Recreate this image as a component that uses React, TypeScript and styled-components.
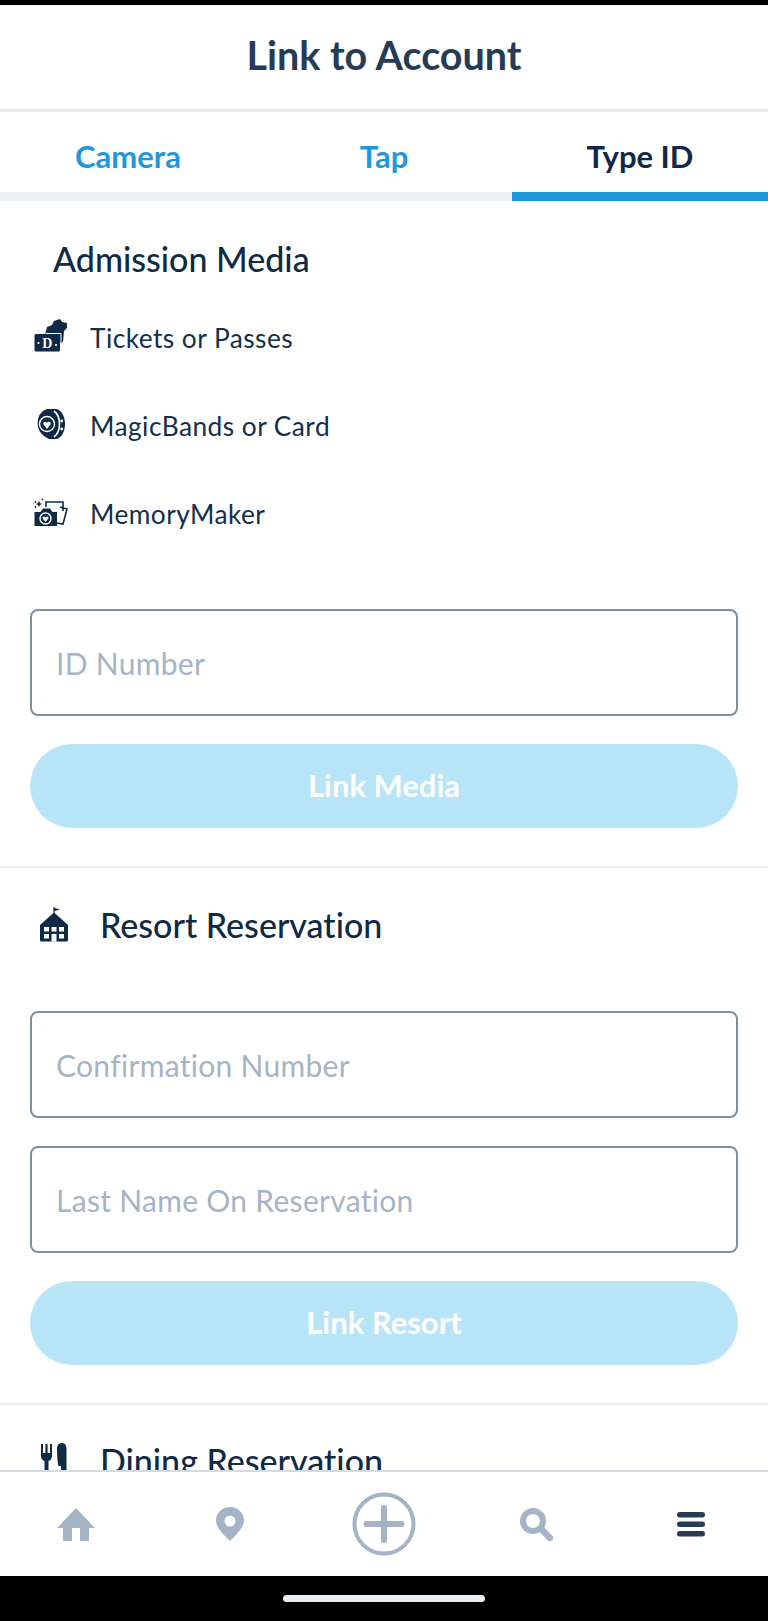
import React from "react";
import styled, { createGlobalStyle } from "styled-components";

const Global = createGlobalStyle`
  html, body { margin: 0; padding: 0; background: #fff; }
  * { box-sizing: border-box; }
  body { font-family: "Lato", "Liberation Sans", sans-serif; font-variant-ligatures: none; }
`;

const Phone = styled.div`
  width: 768px;
  height: 1621px;
  display: flex;
  flex-direction: column;
  overflow: hidden;
  background: #fff;
`;
const TopEdge = styled.div`
  height: 5px;
  flex: none;
  background: #000;
`;
const Header = styled.header`
  height: 107px;
  flex: none;
  display: flex;
  align-items: center;
  justify-content: center;
  padding-bottom: 6px;
  border-bottom: 3px solid #e8ecef;
`;
const Title = styled.h1`
  margin: 0;
  font-size: 39.5px;
  font-weight: 700;
  color: #253b56;
`;
const Tabs = styled.nav`
  flex: none;
  display: grid;
  grid-template-columns: repeat(3, 1fr);
  height: 89px;
`;
const Tab = styled.div<{ $active?: boolean }>`
  display: flex;
  align-items: center;
  justify-content: center;
  padding-top: 7px;
  font-size: 31px;
  font-weight: 700;
  color: ${(p) => (p.$active ? "#10294a" : "#1f97dc")};
  border-bottom: 9px solid ${(p) => (p.$active ? "#1f97dc" : "#edf1f4")};
`;
const Content = styled.main`
  flex: 1;
  min-height: 0;
  overflow: hidden;
`;
const Section = styled.section`
  padding: 0 30px 38px;
  border-bottom: 2px solid #eceff1;
`;
const SectionHead = styled.h2`
  margin: 0;
  display: flex;
  align-items: center;
  gap: 30px;
  height: 40px;
  font-size: 34px;
  font-weight: 500;
  color: #0f2a45;
`;
const MediaHead = styled(SectionHead)`
  padding-left: 23px;
  margin-top: 37px;
`;
const ResortHead = styled(SectionHead)`
  margin: 36px 0 67px 8px;
`;
const DiningHead = styled(SectionHead)`
  margin: 35px 0 0 8px;
`;
const HeadIcon = styled.svg`
  width: 32px;
  height: 36px;
  flex: none;
  fill: #0f2a45;
`;
const MediaList = styled.ul`
  list-style: none;
  margin: 40px 0 75px;
  padding: 0;
  display: flex;
  flex-direction: column;
  gap: 48px;
`;
const MediaItem = styled.li`
  display: flex;
  align-items: center;
  height: 40px;
  padding-left: 3px;
  gap: 22px;
  font-size: 26.3px;
  color: #12304c;
  letter-spacing: 0.45px;
`;
const ItemIcon = styled.svg`
  width: 35px;
  height: 40px;
  flex: none;
`;
const Fields = styled.div`
  display: flex;
  flex-direction: column;
  gap: 28px;
`;
const Field = styled.input`
  display: block;
  width: 100%;
  height: 107px;
  padding: 0 24px;
  border: 2px solid #7a8fa0;
  border-radius: 8px;
  background: #fff;
  font: 400 30px "Lato", sans-serif;
  letter-spacing: 0.3px;
  outline: none;
  &::placeholder { color: #a5b4c5; opacity: 1; }
`;
const PillButton = styled.button`
  display: block;
  width: 100%;
  height: 84px;
  padding: 0 0 3px;
  border: 0;
  border-radius: 42px;
  background: #b8e4f8;
  color: #fff;
  font: 700 31px "Lato", sans-serif;
`;
const BottomNav = styled.nav`
  flex: none;
  height: 106px;
  display: grid;
  grid-template-columns: repeat(5, 1fr);
  align-items: center;
  justify-items: center;
  background: #fff;
  border-top: 2px solid #d4dae4;
`;
const NavCell = styled.div<{ $shift: number }>`
  display: flex;
  transform: translateX(${(p) => p.$shift}px);
`;
const HomeBar = styled.div`
  flex: none;
  height: 45px;
  background: #000;
  display: flex;
  justify-content: center;
  padding-top: 19px;
`;
const HomePill = styled.div`
  width: 202px;
  height: 7px;
  border-radius: 4px;
  background: #e9eef2;
`;

const TicketIcon = () => (
  <ItemIcon viewBox="0 0 35 40" fill="#0f2a45">
    <path d="M12 17 L14 9 L19 7 L21 3 L27 1 L29 4 L34 5 L34 10 L31 13 L30 24 L27 25 L27 17 Z" />
    <rect x="1.5" y="16" width="25.5" height="17.5" rx="1.5" />
    <path d="M13 15.5 H28 V25" fill="none" stroke="#fff" strokeWidth="1" />
    <text x="14.5" y="29.5" textAnchor="middle" fontFamily="Liberation Serif, serif" fontWeight="700" fontSize="14" fill="#fff">D</text>
    <circle cx="5.5" cy="25" r="1.1" fill="#fff" />
    <circle cx="23" cy="27" r="1.1" fill="#fff" />
  </ItemIcon>
);
const BandIcon = () => (
  <ItemIcon viewBox="0 0 35 40" fill="#0f2a45">
    <g transform="translate(1 -2)">
      <path d="M13 5 L23 5 C28 7 31 13 31 20 C31 27 28 33 23 35 L15 35 C11 33 8 31 5.5 27 C3 22 3 16 5.5 11 C7.5 8 10 6 13 5 Z" />
      <path d="M20 7 C24 10 25.5 15 25.5 20 C25.5 25 24 30 20 33" fill="none" stroke="#fff" strokeWidth="1.6" />
      <circle cx="27.7" cy="17" r="1.4" fill="#fff" />
      <circle cx="27.7" cy="25" r="1.4" fill="#fff" />
      <circle cx="13" cy="20" r="7.5" fill="none" stroke="#fff" strokeWidth="1.4" />
      <path d="M13 25 L9.5 20.5 C8.5 18 11.5 16.5 13 18.8 C14.5 16.5 17.5 18 16.5 20.5 Z" fill="#fff" />
    </g>
  </ItemIcon>
);
const MemoryIcon = () => (
  <ItemIcon viewBox="0 0 35 40">
    <path d="M13 13 V8 H30 V17" fill="none" stroke="#0f2a45" strokeWidth="1.6" />
    <path d="M27 13 L34 15 L30 30 L24 29" fill="none" stroke="#0f2a45" strokeWidth="1.6" />
    <path d="M1.5 18 H7.5 L10 14.5 H17 L19.5 18 H24 V32 H1.5 Z" fill="#0f2a45" />
    <circle cx="12.5" cy="24.5" r="5.5" fill="none" stroke="#fff" strokeWidth="1.4" />
    <path d="M12.5 28 L9.6 24.6 C8.9 22.7 11.2 21.6 12.5 23.4 C13.8 21.6 16.1 22.7 15.4 24.6 Z" fill="#fff" />
    <path d="M6 7 l1 2 l2 1 l-2 1 l-1 2 l-1 -2 l-2 -1 l2 -1 Z" fill="#0f2a45" />
    <circle cx="2.5" cy="8" r="0.9" fill="#0f2a45" />
    <circle cx="9.5" cy="5.5" r="0.9" fill="#0f2a45" />
    <circle cx="2.5" cy="13" r="0.9" fill="#0f2a45" />
  </ItemIcon>
);
const ResortIcon = () => (
  <HeadIcon viewBox="0 0 32 36">
    <path d="M15.4 1 H16.6 V2 L22 3.5 L16.6 5 V7 L30 19 V34 C30 35 29.5 35.5 28.5 35.5 H3.5 C2.5 35.5 2 35 2 34 V19 L15.4 7 Z" />
    <g fill="#fff">
      <rect x="6" y="21" width="5" height="4.5" />
      <rect x="13.5" y="21" width="5" height="4.5" />
      <rect x="21" y="21" width="5" height="4.5" />
      <rect x="6" y="28" width="5" height="4.5" />
      <rect x="13.5" y="28" width="5" height="7.5" />
      <rect x="21" y="28" width="5" height="4.5" />
    </g>
  </HeadIcon>
);
const DiningIcon = () => (
  <HeadIcon viewBox="0 0 32 36">
    <path d="M3 2 H5 V11 H7.4 V2 H9.6 V11 H12 V2 H14 V14 C14 17 12 18.5 10.5 19 V34 H6.5 V19 C5 18.5 3 17 3 14 Z" />
    <path d="M19 7 C19 3 21 1 24 1 C27 1 28.5 3 28.5 7 V34 H23 V24 H20.5 C19.5 20 19 14 19 7 Z" />
  </HeadIcon>
);

const HomeNav = () => (
  <svg width="38" height="33" viewBox="0 0 38 33" fill="#a4b3c6">
    <path d="M19 0 L38 20 H32 V33 H23 V20 H15 V33 H6 V20 H0 Z" />
  </svg>
);
const PinNav = () => (
  <svg width="28" height="34" viewBox="0 0 28 34" fill="#a4b3c6" fillRule="evenodd">
    <path d="M14 0 C22 0 28 6 28 13.5 C28 21 19 29 14 34 C9 29 0 21 0 13.5 C0 6 6 0 14 0 Z M14 8.5 A5.5 5.5 0 1 0 14 19.5 A5.5 5.5 0 1 0 14 8.5 Z" />
  </svg>
);
const PlusNav = () => (
  <svg width="64" height="64" viewBox="0 0 64 64" fill="none" stroke="#a4b3c6">
    <circle cx="32" cy="32" r="29.5" strokeWidth="4" />
    <path d="M32 16 V48 M14.5 32 H49.5" strokeWidth="6" strokeLinecap="round" />
  </svg>
);
const SearchNav = () => (
  <svg width="33" height="33" viewBox="0 0 33 33" fill="none" stroke="#a4b3c6">
    <circle cx="13" cy="13" r="10" strokeWidth="6" />
    <path d="M21 21 L30 30" strokeWidth="6.5" strokeLinecap="round" />
  </svg>
);
const MenuNav = () => (
  <svg width="28" height="25" viewBox="0 0 28 25" fill="#253b56">
    <rect y="0" width="28" height="5.5" rx="2.7" />
    <rect y="9.5" width="28" height="5.5" rx="2.7" />
    <rect y="19" width="28" height="5.5" rx="2.7" />
  </svg>
);

export default function App() {
  return (
    <Phone>
      <Global />
      <TopEdge />
      <Header>
        <Title>Link to Account</Title>
      </Header>
      <Tabs>
        <Tab>Camera</Tab>
        <Tab>Tap</Tab>
        <Tab $active>Type ID</Tab>
      </Tabs>
      <Content>
        <Section>
          <MediaHead>Admission Media</MediaHead>
          <MediaList>
            <MediaItem><TicketIcon />Tickets or Passes</MediaItem>
            <MediaItem><BandIcon />MagicBands or Card</MediaItem>
            <MediaItem><MemoryIcon />MemoryMaker</MediaItem>
          </MediaList>
          <Fields>
            <Field placeholder="ID Number" />
            <PillButton>Link Media</PillButton>
          </Fields>
        </Section>
        <Section>
          <ResortHead><ResortIcon />Resort Reservation</ResortHead>
          <Fields>
            <Field placeholder="Confirmation Number" />
            <Field placeholder="Last Name On Reservation" />
            <PillButton>Link Resort</PillButton>
          </Fields>
        </Section>
        <Section>
          <DiningHead><DiningIcon />Dining Reservation</DiningHead>
        </Section>
      </Content>
      <BottomNav>
        <NavCell $shift={-1}><HomeNav /></NavCell>
        <NavCell $shift={0}><PinNav /></NavCell>
        <NavCell $shift={0}><PlusNav /></NavCell>
        <NavCell $shift={-1}><SearchNav /></NavCell>
        <NavCell $shift={0}><MenuNav /></NavCell>
      </BottomNav>
      <HomeBar><HomePill /></HomeBar>
    </Phone>
  );
}
